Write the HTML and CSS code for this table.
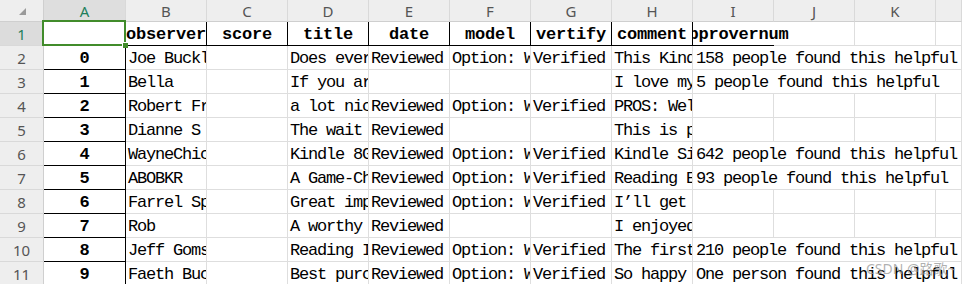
FILE: index.html
```html
<!DOCTYPE html>
<html>
<head>
<meta charset="utf-8">
<link rel="stylesheet" href="styles.css">
</head>
<body>
<div class="wrap">
  <div class="sheet">
    <div class="ch corner"><span class="tri"></span></div>
    <div class="ch sel">A</div>
    <div class="ch">B</div>
    <div class="ch">C</div>
    <div class="ch">D</div>
    <div class="ch">E</div>
    <div class="ch">F</div>
    <div class="ch">G</div>
    <div class="ch">H</div>
    <div class="ch">I</div>
    <div class="ch">J</div>
    <div class="ch">K</div>
    <div class="ch"></div>

    <div class="rh sel">1</div>
    <div class="c idx a1"><span class="selbox"></span><span class="handle"></span></div>
    <div class="c hd">observer</div>
    <div class="c hd">score</div>
    <div class="c hd">title</div>
    <div class="c hd">date</div>
    <div class="c hd">model</div>
    <div class="c hd">vertify</div>
    <div class="c hd">comment</div>
    <div class="c hd hd-over">approvernum</div>
    <div class="c"></div>
    <div class="c"></div>
    <div class="c"></div>

    <div class="rh">2</div>
    <div class="c idx">0</div>
    <div class="c">Joe Buckley</div>
    <div class="c"></div>
    <div class="c">Does every</div>
    <div class="c">Reviewed</div>
    <div class="c">Option: Wi-Fi</div>
    <div class="c">Verified</div>
    <div class="c">This Kindle</div>
    <div class="c wide">158 people found this helpful</div>

    <div class="rh">3</div>
    <div class="c idx">1</div>
    <div class="c">Bella</div>
    <div class="c"></div>
    <div class="c">If you are</div>
    <div class="c"></div>
    <div class="c"></div>
    <div class="c"></div>
    <div class="c">I love my</div>
    <div class="c wide">5 people found this helpful</div>

    <div class="rh">4</div>
    <div class="c idx">2</div>
    <div class="c">Robert Frost</div>
    <div class="c"></div>
    <div class="c">a lot nicer</div>
    <div class="c">Reviewed</div>
    <div class="c">Option: Wi-Fi</div>
    <div class="c">Verified</div>
    <div class="c">PROS: Well</div>
    <div class="c"></div>
    <div class="c"></div>
    <div class="c"></div>
    <div class="c"></div>

    <div class="rh">5</div>
    <div class="c idx">3</div>
    <div class="c">Dianne S</div>
    <div class="c"></div>
    <div class="c">The wait is</div>
    <div class="c">Reviewed</div>
    <div class="c"></div>
    <div class="c"></div>
    <div class="c">This is perfect</div>
    <div class="c"></div>
    <div class="c"></div>
    <div class="c"></div>
    <div class="c"></div>

    <div class="rh">6</div>
    <div class="c idx">4</div>
    <div class="c">WayneChicago</div>
    <div class="c"></div>
    <div class="c">Kindle 8GB</div>
    <div class="c">Reviewed</div>
    <div class="c">Option: Wi-Fi</div>
    <div class="c">Verified</div>
    <div class="c">Kindle Signature</div>
    <div class="c wide">642 people found this helpful</div>

    <div class="rh">7</div>
    <div class="c idx">5</div>
    <div class="c">ABOBKR</div>
    <div class="c"></div>
    <div class="c">A Game-Changer</div>
    <div class="c">Reviewed</div>
    <div class="c">Option: Wi-Fi</div>
    <div class="c">Verified</div>
    <div class="c">Reading Experience</div>
    <div class="c wide">93 people found this helpful</div>

    <div class="rh">8</div>
    <div class="c idx">6</div>
    <div class="c">Farrel Spence</div>
    <div class="c"></div>
    <div class="c">Great improvement</div>
    <div class="c">Reviewed</div>
    <div class="c">Option: Wi-Fi</div>
    <div class="c">Verified</div>
    <div class="c">I’ll get</div>
    <div class="c"></div>
    <div class="c"></div>
    <div class="c"></div>
    <div class="c"></div>

    <div class="rh">9</div>
    <div class="c idx">7</div>
    <div class="c">Rob</div>
    <div class="c"></div>
    <div class="c">A worthy upgrade</div>
    <div class="c">Reviewed</div>
    <div class="c"></div>
    <div class="c"></div>
    <div class="c">I enjoyed</div>
    <div class="c"></div>
    <div class="c"></div>
    <div class="c"></div>
    <div class="c"></div>

    <div class="rh">10</div>
    <div class="c idx">8</div>
    <div class="c">Jeff Gomsrud</div>
    <div class="c"></div>
    <div class="c">Reading In</div>
    <div class="c">Reviewed</div>
    <div class="c">Option: Wi-Fi</div>
    <div class="c">Verified</div>
    <div class="c">The first</div>
    <div class="c wide">210 people found this helpful</div>

    <div class="rh">11</div>
    <div class="c idx">9</div>
    <div class="c">Faeth Buck</div>
    <div class="c"></div>
    <div class="c">Best purchase</div>
    <div class="c">Reviewed</div>
    <div class="c">Option: Wi-Fi</div>
    <div class="c">Verified</div>
    <div class="c">So happy with</div>
    <div class="c wide">One person found this helpful</div>
  </div>
  <div class="watermark">CSDN @路歌~</div>
</div>
</body>
</html>
```
FILE: styles.css
```css
html, body {
  margin: 0;
  padding: 0;
  background: #ffffff;
  overflow: hidden;
}

.wrap {
  position: relative;
  width: 962px;
  height: 284px;
  overflow: hidden;
}

.sheet {
  display: grid;
  grid-template-columns: 44px 82px repeat(10, 81px) 1fr;
  grid-template-rows: 22px repeat(11, 24px);
  width: 962px;
}

.ch {
  box-sizing: border-box;
  background: #eeeeee;
  border-right: 1px solid #d9d9d9;
  border-bottom: 1px solid #cfcfcf;
  display: flex;
  align-items: center;
  justify-content: center;
  font-family: "Noto Sans", "Liberation Sans", sans-serif;
  font-size: 15px;
  color: #555555;
}

.ch.sel {
  background: #dedede;
  color: #1f7f5c;
}

.corner {
  position: relative;
  border-right-color: #cfcfcf;
}

.tri {
  width: 0;
  height: 0;
  border-left: 7px solid transparent;
  border-bottom: 7px solid #9a9a9a;
  margin-left: 2px;
  margin-top: 2px;
}

.rh {
  box-sizing: border-box;
  background: #eeeeee;
  border-right: 1px solid #cfcfcf;
  border-bottom: 1px solid #d9d9d9;
  display: flex;
  align-items: center;
  justify-content: center;
  font-family: "Noto Sans", "Liberation Sans", sans-serif;
  font-size: 15px;
  color: #555555;
  padding-top: 1px;
}

.rh.sel {
  background: #dcdcdc;
  color: #1f7f5c;
}

.c {
  box-sizing: border-box;
  border-right: 1px solid #dedede;
  border-bottom: 1px solid #dedede;
  overflow: hidden;
  white-space: nowrap;
  display: flex;
  align-items: center;
  padding: 2px 0 0 2px;
  font-family: "Liberation Mono", "DejaVu Sans Mono", monospace;
  font-size: 17px;
  letter-spacing: -1.2px;
  color: #000000;
}

.c.idx {
  border-right-color: #000000;
  border-bottom-color: #000000;
  justify-content: center;
  padding-left: 0;
  font-weight: bold;
  letter-spacing: 0;
}

.c.a1 {
  position: relative;
  overflow: visible;
}

.selbox {
  position: absolute;
  left: -2px;
  top: -2px;
  width: 84px;
  height: 26px;
  box-sizing: border-box;
  border: 2px solid #418c2b;
}

.handle {
  position: absolute;
  left: 78px;
  top: 20px;
  width: 5px;
  height: 5px;
  background: #418c2b;
  border-left: 1px solid #ffffff;
  border-top: 1px solid #ffffff;
}

.c.hd {
  border-right-color: #000000;
  border-bottom-color: #000000;
  justify-content: center;
  padding-left: 0;
  font-weight: bold;
  letter-spacing: -0.2px;
}

.c.hd-over {
  border-right: none;
  overflow: visible;
  clip-path: inset(-2px -200px -2px 0);
}

.c.wide {
  grid-column: span 4;
  padding-left: 3px;
}

.watermark {
  position: absolute;
  left: 866px;
  top: 258px;
  font-family: "Noto Sans", "Noto Sans CJK SC", sans-serif;
  font-size: 14px;
  color: rgba(150, 150, 150, 0.75);
  white-space: nowrap;
}
```
